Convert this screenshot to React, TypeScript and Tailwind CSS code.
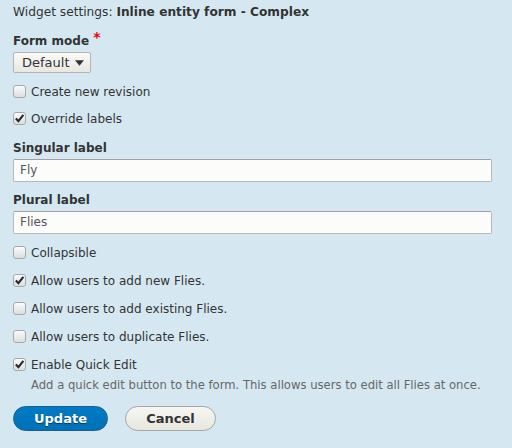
import React from 'react';

function Checkbox({ checked }: { checked?: boolean }) {
  return (
    <span className="relative -top-[1px] inline-block w-[13px] h-[13px] shrink-0 rounded-[3px] border border-[#a9a9a9] bg-gradient-to-b from-[#fbfbfb] to-[#dedede]">
      {checked && (
        <svg viewBox="0 0 12 12" className="absolute left-[0px] top-[0px] w-[11px] h-[11px]">
          <path d="M2 6 L4.8 8.8 L10.2 2" fill="none" stroke="#2b2b2b" strokeWidth="2.4" />
        </svg>
      )}
    </span>
  );
}

function CheckRow({ label, checked, className = '' }: { label: string; checked?: boolean; className?: string }) {
  return (
    <div className={`flex items-center gap-[5px] h-[18px] leading-[18px] ${className}`}>
      <Checkbox checked={checked} />
      <span>{label}</span>
    </div>
  );
}

export default function App() {
  return (
    <div
      className="w-[512px] h-[448px] bg-[#d5e8f2] text-[#333] text-[12px] px-[13px] overflow-hidden"
      style={{ fontFamily: '"DejaVu Sans", sans-serif' }}
    >
      <div className="pt-[3px] leading-[18px] text-[12.2px]">
        Widget settings: <span className="font-bold">Inline entity form - Complex</span>
      </div>

      <div className="mt-[10px] leading-[18px] font-bold">
        Form mode <span className="text-[#e00] relative -top-[3px] text-[14px]">*</span>
      </div>
      <div className="mt-[2px] flex items-center w-[78px] h-[21px] border border-[#b5b5b5] rounded-[2px] bg-gradient-to-b from-[#fafaf7] to-[#e8e7e2] pl-[8px] pr-[6px] text-[#333] text-[13px]">
        <span className="flex-1 leading-[18px]">Default</span>
        <svg viewBox="0 0 10 6" className="w-[9px] h-[6px]">
          <path d="M0 0 L10 0 L5 6 Z" fill="#333" />
        </svg>
      </div>

      <CheckRow label="Create new revision" className="mt-[10px]" />
      <CheckRow label="Override labels" checked className="mt-[9px]" />

      <div className="mt-[11px] leading-[18px] font-bold">Singular label</div>
      <div className="mt-[2px] h-[23px] w-[479px] border border-[#b8b8b8] border-t-[#a0a0a0] rounded-[2px] bg-[#fcfcfa] pl-[6px] leading-[21px] text-[#555]">
        Fly
      </div>

      <div className="mt-[9px] leading-[18px] font-bold">Plural label</div>
      <div className="mt-[2px] h-[23px] w-[479px] border border-[#b8b8b8] border-t-[#a0a0a0] rounded-[2px] bg-[#fcfcfa] pl-[6px] leading-[21px] text-[#555]">
        Flies
      </div>

      <CheckRow label="Collapsible" className="mt-[10px]" />
      <CheckRow label="Allow users to add new Flies." checked className="mt-[10px]" />
      <CheckRow label="Allow users to add existing Flies." className="mt-[10px]" />
      <CheckRow label="Allow users to duplicate Flies." className="mt-[10px]" />
      <CheckRow label="Enable Quick Edit" checked className="mt-[10px]" />
      <div className="mt-[3px] pl-[18px] text-[11.6px] leading-[16px] text-[#666]">
        Add a quick edit button to the form. This allows users to edit all Flies at once.
      </div>

      <div className="mt-[13px] flex gap-[17px]">
        <button className="w-[95px] h-[25px] rounded-full border border-[#1e5c90] bg-gradient-to-b from-[#007bc6] to-[#0071b8] text-white font-bold text-[13px] [text-shadow:0_1px_1px_rgba(0,0,0,0.5)]">
          Update
        </button>
        <button className="w-[91px] h-[25px] rounded-full border border-[#a6a6a6] bg-gradient-to-b from-[#f6f6f3] to-[#e7e7df] text-[#333] font-bold text-[13px]">
          Cancel
        </button>
      </div>
    </div>
  );
}
